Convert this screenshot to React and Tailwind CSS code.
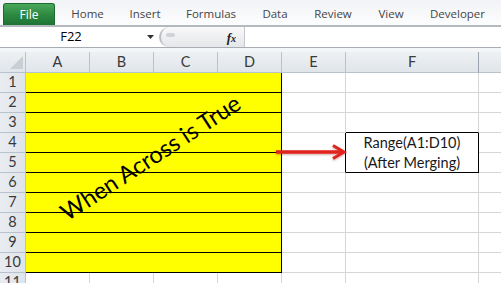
import React from 'react';

const tabs = [
  { label: 'Home', w: 'w-[65px]' },
  { label: 'Insert', w: 'w-[50px]' },
  { label: 'Formulas', w: 'w-[82px]' },
  { label: 'Data', w: 'w-[46px]' },
  { label: 'Review', w: 'w-[70px]' },
  { label: 'View', w: 'w-[46px]' },
  { label: 'Developer', w: 'w-[87px]' },
];

const colHeads = ['A', 'B', 'C', 'D', 'E', 'F', ''];

function RowHead({ n }) {
  return (
    <div className="h-[20px] bg-gradient-to-r from-[#e9edf1] to-[#dfe4ea] border-r border-b border-[#b8c2cc] flex items-center justify-center text-[14.5px] leading-none text-[#3a3a3a]">
      {n}
    </div>
  );
}

function Row({ r }) {
  const cells = [];
  cells.push(<RowHead key="h" n={r} />);
  if (r <= 10) {
    cells.push(
      <div key="y" className="col-span-4 h-[20px] bg-[#ffff00] border-b border-r border-black" />
    );
  } else {
    for (let i = 0; i < 4; i++)
      cells.push(<div key={'w' + i} className="h-[20px] border-b border-r border-[#d6d6d6]" />);
  }
  cells.push(
    <div
      key="e"
      className={
        r === 4 || r === 5
          ? 'h-[20px] border-b border-[#d6d6d6] border-r-black border-r'
          : 'h-[20px] border-b border-r border-[#d6d6d6]'
      }
    />
  );
  if (r === 4) {
    cells.push(
      <div
        key="f"
        className="row-span-2 h-[40px] border-r border-b border-black flex flex-col items-center justify-center text-[14.5px] leading-[20px] text-[#1a1a1a]"
      >
        <span>Range(A1:D10)</span>
        <span>(After Merging)</span>
      </div>
    );
  } else if (r !== 5) {
    cells.push(
      <div
        key="f"
        className={
          r === 3
            ? 'h-[20px] border-r border-[#d6d6d6] border-b border-b-black'
            : 'h-[20px] border-b border-r border-[#d6d6d6]'
        }
      />
    );
  }
  cells.push(<div key="g" className="h-[20px] border-b border-[#d6d6d6]" />);
  return cells;
}

export default function App() {
  const rows = [];
  for (let r = 1; r <= 11; r++) rows.push(...Row({ r }).map((c, i) => React.cloneElement(c, { key: r + '-' + i })));

  return (
    <div className="relative w-[501px] h-[283px] overflow-hidden bg-white font-['Lato',sans-serif]">
      <div className="h-[27px] flex items-end bg-gradient-to-b from-[#f1f3f6] to-[#fdfdfe] border-b-2 border-[#b4b9bf]">
        <div className="ml-[3px] w-[52px] h-[22px] rounded-t-[3px] bg-gradient-to-b from-[#4aa85b] via-[#2d8a40] to-[#1f7333] border border-[#1c6a2f] border-b-0 flex items-center justify-center text-white text-[12px] font-['Open_Sans',sans-serif]">
          File
        </div>
        {tabs.map((t) => (
          <div
            key={t.label}
            className={`${t.w} h-[22px] flex items-center justify-center text-[11.5px] text-[#454545] font-['Open_Sans',sans-serif]`}
          >
            {t.label}
          </div>
        ))}
      </div>

      <div className="h-[21px] flex border-b border-[#a8adb3] bg-white">
        <div className="w-[142px] flex items-center justify-center text-[13px] text-black font-['Open_Sans',sans-serif]">
          F22
        </div>
        <div className="w-[17px] flex items-center justify-center">
          <svg width="7" height="4" viewBox="0 0 7 4">
            <path d="M0 0 L7 0 L3.5 4 Z" fill="#333" />
          </svg>
        </div>
        <div className="relative w-[86px] h-full rounded-l-[10px] border-l-2 border-[#b9bdc2] bg-gradient-to-b from-[#f9f9f9] to-[#e4e6e8] border-r border-r-[#c4c8cc] flex items-center justify-end pr-[8px]">
          <div className="absolute left-[5px] top-[6px] w-[9px] h-[4px] rounded-full bg-[#cfd2d6]" />
          <span className="font-['Liberation_Serif',serif] italic font-bold text-[13px] leading-none text-[#222]">
            f<span className="text-[10px]">x</span>
          </span>
        </div>
        <div className="flex-1 bg-white" />
      </div>

      <div className="h-[4px] bg-[#f4f5f7]" />

      <div className="grid grid-cols-[26px_64px_64px_64px_64px_64px_133px_1fr]">
        <div className="relative h-[21px] bg-gradient-to-b from-[#eef1f4] to-[#e0e5ea] border-r border-b border-[#b8c2cc]">
          <svg className="absolute right-[2px] bottom-[3px]" width="13" height="13" viewBox="0 0 13 13">
            <path d="M13 0 L13 13 L0 13 Z" fill="#c9ced4" />
          </svg>
        </div>
        {colHeads.map((c, i) => (
          <div
            key={'ch' + i}
            className={`h-[21px] bg-gradient-to-b from-[#eef1f4] to-[#e0e5ea] border-b border-[#b8c2cc] ${
              i < 6 ? 'border-r' : ''
            } ${i === 5 ? 'border-r-[#9aa3ad]' : ''} flex items-center justify-center text-[14.5px] leading-none text-[#3a3a3a]`}
          >
            {c}
          </div>
        ))}
        {rows}
      </div>

      <div className="absolute left-[26px] top-[73px] w-[256px] h-[200px] flex items-center justify-center pointer-events-none">
        <span className="whitespace-nowrap text-[23.5px] leading-none text-black -translate-x-[3px] -translate-y-[15px] -rotate-[33deg]">
          When Across is True
        </span>
      </div>

      <svg className="absolute left-0 top-0 pointer-events-none" width="501" height="283" viewBox="0 0 501 283">
        <g style={{ filter: 'drop-shadow(0px 1px 1px rgba(120,0,0,0.35))' }}>
          <line x1="276" y1="152" x2="343" y2="152" stroke="#e2231d" strokeWidth="3.5" />
          <polyline points="333,145.5 344,152 333,158.5" fill="none" stroke="#e2231d" strokeWidth="3" strokeLinejoin="miter" strokeLinecap="butt" />
        </g>
      </svg>
    </div>
  );
}
